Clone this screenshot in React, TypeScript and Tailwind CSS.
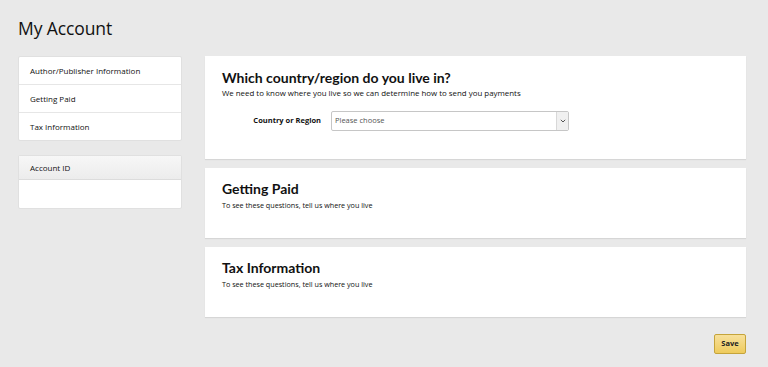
import React from "react";

export default function App() {
  const font = { fontFamily: '"Open Sans", "Noto Sans", sans-serif' };
  const head = { fontFamily: 'Lato, "Open Sans", sans-serif' };
  return (
    <div className="w-[768px] h-[367px] bg-[#e9e9e9] text-[#111] overflow-hidden" style={font}>
      <div className="pl-[18px] pr-[22px] pt-[16px]">
        <h1 className="text-[17.5px] leading-[24px] text-[#111] tracking-[-0.1px]">My Account</h1>
        <div className="flex mt-[16px] gap-[23px]">
          <div className="w-[164px] shrink-0 flex flex-col gap-[14px]">
            <div className="bg-white rounded-[2px] border border-[#e0e0e0] flex flex-col">
              <div className="h-[28px] flex items-center px-[11px] text-[8px] border-b border-[#e6e6e6]">Author/Publisher Information</div>
              <div className="h-[28px] flex items-center px-[11px] text-[8px] border-b border-[#e6e6e6]">Getting Paid</div>
              <div className="h-[27px] flex items-center px-[11px] text-[8px]">Tax Information</div>
            </div>
            <div className="bg-white rounded-[2px] border border-[#e0e0e0] flex flex-col">
              <div className="h-[24px] flex items-center px-[11px] text-[8px] bg-gradient-to-b from-[#f7f7f7] to-[#ececec] border-b border-[#dcdcdc]">Account ID</div>
              <div className="h-[28px]" />
            </div>
          </div>
          <div className="flex-1 flex flex-col gap-[9px]">
            <div className="bg-white h-[103px] px-[17px] pt-[13px] shadow-[0_1px_1px_rgba(0,0,0,0.08)]">
              <h2 className="text-[14px] leading-[18px] font-bold" style={head}>Which country/region do you live in?</h2>
              <p className="text-[7.9px] leading-[10px] mt-[1px]">We need to know where you live so we can determine how to send you payments</p>
              <div className="flex items-center mt-[13px]">
                <label className="w-[99px] text-right text-[7.5px] font-bold">Country or Region</label>
                <div className="ml-[10px] w-[238px] h-[20px] border border-[#c6c6c6] rounded-[2px] flex items-stretch">
                  <div className="flex-1 flex items-center pl-[3px] text-[7.5px] text-[#555]">Please choose</div>
                  <div className="w-[12px] bg-[#f0f0f0] border-l border-[#d8d8d8] flex items-center justify-center">
                    <svg width="6" height="4" viewBox="0 0 6 4"><path d="M0.8 0.8 L3 3 L5.2 0.8" stroke="#555" strokeWidth="1" fill="none" /></svg>
                  </div>
                </div>
              </div>
            </div>
            <div className="bg-white h-[70px] px-[17px] pt-[12px] shadow-[0_1px_1px_rgba(0,0,0,0.08)]">
              <h2 className="text-[14px] leading-[18px] font-bold" style={head}>Getting Paid</h2>
              <p className="text-[7.2px] leading-[10px] mt-[2px]">To see these questions, tell us where you live</p>
            </div>
            <div className="bg-white h-[70px] px-[17px] pt-[12px] shadow-[0_1px_1px_rgba(0,0,0,0.08)]">
              <h2 className="text-[14px] leading-[18px] font-bold" style={head}>Tax Information</h2>
              <p className="text-[7.2px] leading-[10px] mt-[2px]">To see these questions, tell us where you live</p>
            </div>
            <div className="flex justify-end mt-[8px]">
              <button className="w-[32px] h-[20px] rounded-[2px] border border-[#c5a43b] bg-gradient-to-b from-[#f7e09a] to-[#eecb5b] text-[7.5px] font-bold text-[#222]">Save</button>
            </div>
          </div>
        </div>
      </div>
    </div>
  );
}
